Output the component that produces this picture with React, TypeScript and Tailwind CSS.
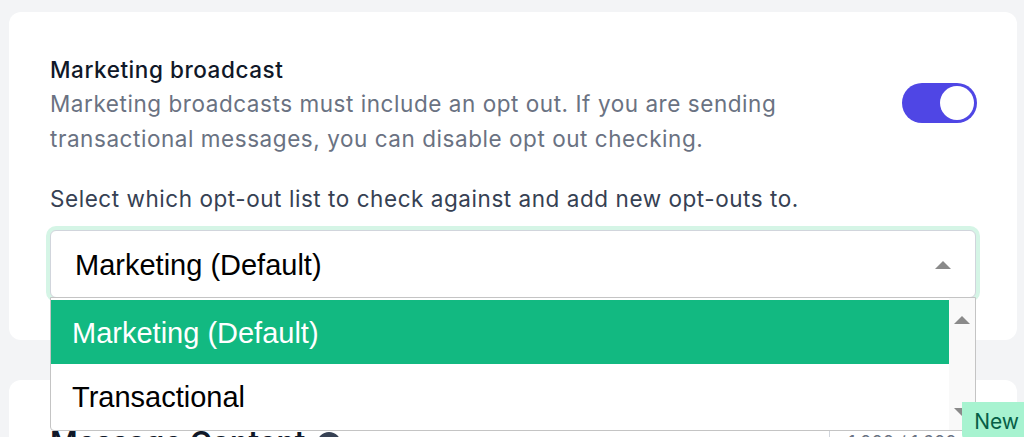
import { useState } from 'react'

const options = ['Marketing (Default)', 'Transactional']

const Toggle = ({ on }: { on: boolean }) => (
  <div
    className={`flex h-[40px] w-[75px] shrink-0 items-center rounded-full px-[3px] ${
      on ? 'justify-end bg-[#4f46e5]' : 'justify-start bg-gray-200'
    }`}
  >
    <div className="h-[34px] w-[34px] rounded-full bg-white" />
  </div>
)

const Triangle = ({ up, className }: { up: boolean; className?: string }) => (
  <svg width="16" height="8" viewBox="0 0 16 8" className={className}>
    {up ? <path d="M0 8 L8 0 L16 8 Z" fill="#8a8a8a" /> : <path d="M0 0 L8 8 L16 0 Z" fill="#8a8a8a" />}
  </svg>
)

export default function App() {
  const [enabled] = useState(true)
  const [selected] = useState(0)

  return (
    <div className="relative h-[437px] w-full overflow-hidden bg-[#f3f4f6] pl-[9px] pr-[7px] pt-[12px] font-['Inter',sans-serif]">
      <div className="relative z-10 h-[328px] rounded-xl bg-white pl-[41px] pr-[40px] pt-[43px]">
        <div className="flex items-start justify-between">
          <div className="tracking-[0.55px]">
            <p className="text-[22.5px] font-medium leading-[30px] text-gray-900">Marketing broadcast</p>
            <p className="mt-[1px] text-[22.5px] leading-[35px] text-gray-500">
              Marketing broadcasts must include an opt out. If you are sending
              <br />
              transactional messages, you can disable opt out checking.
            </p>
          </div>
          <div className="mt-[28px]">
            <Toggle on={enabled} />
          </div>
        </div>

        <p className="mt-[28px] text-[22.5px] leading-[30px] tracking-[0.55px] text-gray-700">
          Select which opt-out list to check against and add new opt-outs to.
        </p>

        <div className="relative mr-[1px] mt-[16px]">
          <div className="flex h-[68px] items-center justify-between rounded-md border border-gray-300 bg-white pl-[24px] pr-[24px] shadow-[0_0_0_4px_#d5f5e6] font-['Liberation_Sans',Arial,sans-serif]">
            <span className="mt-[3px] text-[29px] text-black">{options[selected]}</span>
            <Triangle up className="mt-[1px]" />
          </div>

          <div className="absolute left-0 right-0 top-[67px] flex h-[134px] rounded-b-[4px] border border-[#c4c4c4] bg-white font-['Liberation_Sans',Arial,sans-serif]">
            <div className="flex-1 pt-[2px]">
              {options.map((o, i) => (
                <div
                  key={o}
                  className={`flex h-[64px] items-center pl-[21px] pt-[4px] text-[29px] ${
                    i === selected ? 'bg-[#12b981] text-white' : 'text-black'
                  }`}
                >
                  {o}
                </div>
              ))}
            </div>
            <div className="flex w-[26px] flex-col items-center justify-between bg-[#f9f9f9] pb-[14px] pt-[18px]">
              <Triangle up />
              <Triangle up={false} />
            </div>
          </div>
        </div>
      </div>

      <div className="mt-[40px] h-[200px] rounded-xl bg-white pl-[41px] pr-[40px] pt-[44px]">
        <div className="flex items-start">
          <h2 className="text-[30px] font-semibold leading-[36px] text-gray-900">Message Content</h2>
          <span className="ml-[12px] mt-[8px] flex h-[24px] w-[24px] items-center justify-center rounded-full bg-gray-700 text-[14px] font-bold text-white">
            ?
          </span>
          <div className="ml-auto mt-[-10px] h-[60px] w-[148px] rounded-md border border-gray-300 px-[18px] pt-[14px] text-[18px] text-gray-500">
            1,000 / 1,600
          </div>
        </div>
      </div>

      <div className="absolute right-0 top-[402px] z-20 rounded-bl-lg bg-[#a7f3d0] py-[2px] pl-[12px] pr-[5px] text-[21px] leading-[36px] text-[#065f46]">
        New
      </div>
    </div>
  )
}
